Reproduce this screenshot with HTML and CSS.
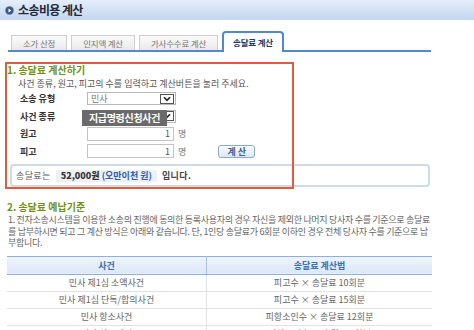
FILE: index.html
```html
<!DOCTYPE html>
<html>
  <head>
    <meta charset="utf-8">
    <link rel="stylesheet" href="styles.css">
  </head>
  <body>
    <div class="page">
      <div class="titlebar">
        <svg class="title-icon" width="9" height="9" viewBox="0 0 9 9">
          <circle cx="4.5" cy="4.5" r="4.2" fill="#3d5683" stroke="#8da3c6" stroke-width="0.6"/>
          <path d="M3.5 2.6 L6.3 4.5 L3.5 6.4 Z" fill="#fff"/>
        </svg>
        <h1>소송비용 계산</h1>
      </div>

      <ul class="tabs">
        <li>소가 산정</li>
        <li>인지액 계산</li>
        <li>가사수수료 계산</li>
        <li class="on">송달료 계산</li>
      </ul>

      <div class="section">
        <h2>1. 송달료 계산하기</h2>
        <p class="guide">사건 종류, 원고, 피고의 수를 입력하고 계산버튼을 눌러 주세요.</p>
        <div class="form">
          <label>소송 유형</label>
          <div class="field">
            <div class="select">민사<span class="arrow"><svg width="8" height="6" viewBox="0 0 8 6"><path d="M1 1.2 L4 4.4 L7 1.2" fill="none" stroke="#222" stroke-width="1.6"/></svg></span></div>
          </div>
          <label>사건 종류</label>
          <div class="field">
            <div class="select"><span class="arrow"><svg width="8" height="6" viewBox="0 0 8 6"><path d="M1 1.2 L4 4.4 L7 1.2" fill="none" stroke="#222" stroke-width="1.6"/></svg></span></div>
            <div class="picked">지급명령신청사건</div>
          </div>
          <label>원고</label>
          <div class="field">
            <input class="count" type="text" value="1"><span class="unit">명</span>
          </div>
          <label>피고</label>
          <div class="field">
            <input class="count" type="text" value="1"><span class="unit">명</span>
            <button class="calc-btn">계 산</button>
          </div>
        </div>
        <div class="result">
          <span>송달료는</span>
          <span class="amount"><b>52,000원</b> <em>(오만이천 원)</em></span>
          <strong>입니다.</strong>
        </div>
      </div>

      <div class="section">
        <h2>2. 송달료 예납기준</h2>
        <p class="rule">1. 전자소송시스템을 이용한 소송의 진행에 동의한 등록사용자의 경우 자신을 제외한 나머지 당사자 수를 기준으로 송달료를 납부하시면 되고 그 계산 방식은 아래와 같습니다. 단, 1인당 송달료가 6회분 이하인 경우 전체 당사자 수를 기준으로 납부합니다.</p>
        <table class="fee-table">
          <thead>
            <tr><th class="col-case">사건</th><th>송달료 계산법</th></tr>
          </thead>
          <tbody>
            <tr><td class="col-case">민사 제1심 소액사건</td><td>피고수 × 송달료 10회분</td></tr>
            <tr><td class="col-case">민사 제1심 단독/합의사건</td><td>피고수 × 송달료 15회분</td></tr>
            <tr><td class="col-case">민사 항소사건</td><td>피항소인수 × 송달료 12회분</td></tr>
            <tr><td class="col-case">민사 상고사건</td><td>피상고인수 × 송달료 8회분</td></tr>
          </tbody>
        </table>
      </div>

      <div class="mark"></div>
    </div>
  </body>
</html>
```

FILE: styles.css
```css
body {
  margin: 0;
  background: #fff;
  color: #666;
  font-family: "Noto Sans CJK KR", "Noto Sans", sans-serif;
  font-size: 9px;
}

.page {
  position: relative;
}

/* title */
.titlebar {
  height: 20px;
  display: flex;
  align-items: center;
  gap: 4px;
  padding-left: 5px;
  background: linear-gradient(180deg, #e5eefa 0%, #c3d5f1 100%);
}

.title-icon {
  display: block;
}

.titlebar h1 {
  margin: 0;
  font-size: 12px;
  line-height: 20px;
  font-weight: bold;
  color: #1f2a3a;
  letter-spacing: -0.6px;
}

/* tabs */
.tabs {
  display: flex;
  align-items: flex-end;
  height: 19px;
  list-style: none;
  margin: 11px 43px 0 8px;
  padding: 0 0 0 3px;
  border-bottom: 2px solid #4d8ad2;
}

.tabs li {
  box-sizing: border-box;
  height: 15px;
  line-height: 14px;
  margin-right: 4px;
  padding: 0 11px;
  border: 1px solid #cfcfcf;
  border-bottom: none;
  background: linear-gradient(180deg, #fbfbfb, #e9e9e9);
  color: #777;
  font-size: 8.5px;
  letter-spacing: -0.2px;
}

.tabs li.on {
  height: 21px;
  line-height: 18px;
  margin-bottom: -2px;
  padding: 0 9px;
  border: 2px solid #4d8ad2;
  border-bottom: none;
  border-radius: 4px 4px 0 0;
  background: #fff;
  color: #1c3a68;
  font-weight: bold;
}

/* sections */
.section h2 {
  margin: 12px 0 0;
  padding-left: 7px;
  font-size: 10px;
  line-height: 12px;
  font-weight: bold;
  color: #6f9213;
}

.guide {
  margin: 2px 0 0;
  padding-left: 18px;
  line-height: 12px;
  color: #555;
}

.form {
  display: grid;
  grid-template-columns: 87px auto;
  grid-auto-rows: 17.5px;
  align-items: center;
}

.form label {
  padding-left: 20px;
  font-weight: bold;
  color: #333;
}

.field {
  position: relative;
  display: flex;
  align-items: center;
}

.select {
  box-sizing: border-box;
  width: 89px;
  height: 13px;
  display: flex;
  align-items: center;
  justify-content: space-between;
  padding: 0 1px 0 3px;
  border: 1px solid #b8b8b8;
  background: #fff;
  color: #777;
  line-height: 11px;
}

.arrow {
  box-sizing: border-box;
  width: 14px;
  height: 10px;
  margin-left: auto;
  display: flex;
  align-items: center;
  justify-content: center;
  border: 1px solid #555;
  background: #fff;
}

.picked {
  position: absolute;
  left: -5px;
  top: 0;
  width: 85px;
  height: 16px;
  line-height: 16px;
  background: #6a6a6a;
  color: #fff;
  font-size: 10px;
  font-weight: bold;
  text-align: center;
  letter-spacing: -0.3px;
}

.count {
  box-sizing: border-box;
  width: 87px;
  height: 14px;
  margin: 0;
  padding: 0 3px;
  border: 1px solid #c4c4c4;
  font-family: inherit;
  font-size: 9px;
  color: #555;
  text-align: right;
}

.unit {
  margin-left: 4px;
  color: #777;
}

.calc-btn {
  box-sizing: border-box;
  width: 37px;
  height: 13px;
  margin-left: 32px;
  padding: 0;
  border: 1px solid #8ea8c8;
  border-radius: 3px;
  background: linear-gradient(180deg, #fbfdff, #dbe6f3);
  font-family: inherit;
  font-size: 9px;
  line-height: 11px;
  font-weight: bold;
  color: #3b5f90;
}

.result {
  box-sizing: border-box;
  height: 23px;
  margin: 4px 44px 0 10px;
  display: flex;
  align-items: center;
  gap: 5px;
  padding-left: 4px;
  border: 2px solid #cddbe6;
  border-radius: 4px;
  color: #666;
  letter-spacing: 0.4px;
}

.amount {
  height: 12px;
  line-height: 12px;
  padding: 0 5px;
  background: #eef0f3;
  font-weight: bold;
  letter-spacing: 0;
}

.amount b {
  color: #333;
}

.amount em {
  font-style: normal;
  color: #2b5cb0;
}

.result strong {
  color: #444;
}

.section + .section h2 {
  margin-top: 14px;
}

.rule {
  margin: 1px 44px 0 8px;
  line-height: 11.5px;
  word-break: break-all;
  letter-spacing: -0.3px;
  color: #666;
}

/* table */
.fee-table {
  width: 425px;
  margin: 7px 0 0 7px;
  border-collapse: collapse;
}

.fee-table th {
  height: 17px;
  padding: 0;
  border-top: 1px solid #8fb0dc;
  border-bottom: 1px solid #8fb0dc;
  background: linear-gradient(180deg, #eef4fc, #dce7f7);
  color: #3e6fb0;
  font-weight: bold;
}

.fee-table th.col-case {
  border-right: 1px solid #a9c1e2;
}

.fee-table td {
  height: 16px;
  padding: 0;
  border-bottom: 1px solid #e2e2e2;
  text-align: center;
  color: #666;
}

.fee-table .col-case {
  width: 199px;
}

.fee-table td.col-case {
  border-right: 1px solid #e2e2e2;
}

/* red marker drawn over the calculator */
.mark {
  position: absolute;
  left: 5px;
  top: 62px;
  box-sizing: border-box;
  width: 289px;
  height: 127px;
  border: 2px solid #e65a3c;
}
```
